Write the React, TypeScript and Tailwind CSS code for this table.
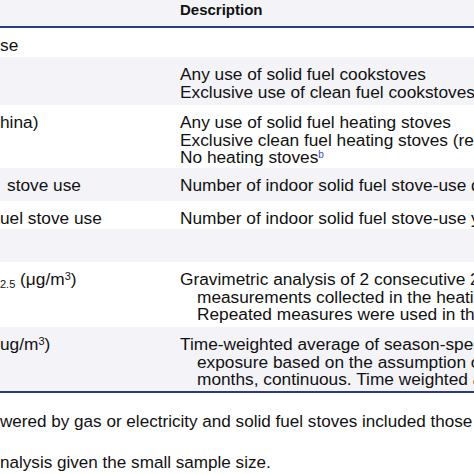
const rows = [
  { h: 29, bg: 'bg-white', left: <span>se</span>, desc: [] as React.ReactNode[] },
  {
    h: 48,
    bg: 'bg-[#f3f3f8]',
    left: null,
    desc: ['Any use of solid fuel cookstoves', 'Exclusive use of clean fuel cookstoves'],
  },
  {
    h: 63,
    bg: 'bg-white',
    left: <span>hina)</span>,
    desc: [
      'Any use of solid fuel heating stoves',
      'Exclusive clean fuel heating stoves (reference)',
      <span key="b">
        No heating stoves<sup className="text-[10px] text-[#3a4fc4]">b</sup>
      </span>,
    ],
  },
  {
    h: 33,
    bg: 'bg-[#f3f3f8]',
    left: <span className="pl-[7px]">stove use</span>,
    desc: ['Number of indoor solid fuel stove-use days'],
  },
  {
    h: 28,
    bg: 'bg-white',
    left: <span>uel stove use</span>,
    desc: ['Number of indoor solid fuel stove-use years'],
  },
  { h: 33, bg: 'bg-[#f3f3f8]', left: null, desc: [] },
  {
    h: 65,
    bg: 'bg-white',
    left: (
      <span>
        <sub className="text-[11px]">2.5</sub> (μg/m<sup className="text-[11px]">3</sup>)
      </span>
    ),
    desc: [
      'Gravimetric analysis of 2 consecutive 24-h',
      <span key="m" className="pl-[17px]">measurements collected in the heating season.</span>,
      <span key="r" className="pl-[17px]">Repeated measures were used in the analysis</span>,
    ],
  },
  {
    h: 64,
    bg: 'bg-[#f3f3f8]',
    left: (
      <span>
        ug/m<sup className="text-[11px]">3</sup>)
      </span>
    ),
    desc: [
      'Time-weighted average of season-specific',
      <span key="e" className="pl-[17px]">exposure based on the assumption of 4</span>,
      <span key="mo" className="pl-[17px]">months, continuous. Time weighted average</span>,
    ],
  },
];

export default function App() {
  return (
    <div
      className="w-[474px] h-[474px] overflow-hidden bg-white text-[#111] whitespace-nowrap"
      style={{ fontFamily: '"Liberation Sans", Arial, sans-serif' }}
    >
      {/* header */}
      <div className="flex h-[26px] bg-[#f3f3f8] pt-[1px]">
        <div className="w-[180px] shrink-0" />
        <div className="text-[15px] font-bold leading-[17px]">Description</div>
      </div>
      <div className="h-[2px] bg-[#2a3a86]" />

      {rows.map((r, i) => (
        <div key={i} className={`flex overflow-hidden pt-[9px] text-[17.3px] leading-[17.5px] ${r.bg}`} style={{ height: r.h }}>
          <div className="w-[180px] shrink-0">{r.left}</div>
          <div className="flex flex-col">
            {r.desc.map((d, j) => (
              <div key={j}>{d}</div>
            ))}
          </div>
        </div>
      ))}

      <div className="h-[2px] bg-[#2a3a86]" />

      {/* footnotes */}
      <div className="text-[17.1px] leading-[20px] pt-[19px]">
        <div>wered by gas or electricity and solid fuel stoves included those using coal</div>
        <div className="pt-[21px]">nalysis given the small sample size.</div>
      </div>
    </div>
  );
}
